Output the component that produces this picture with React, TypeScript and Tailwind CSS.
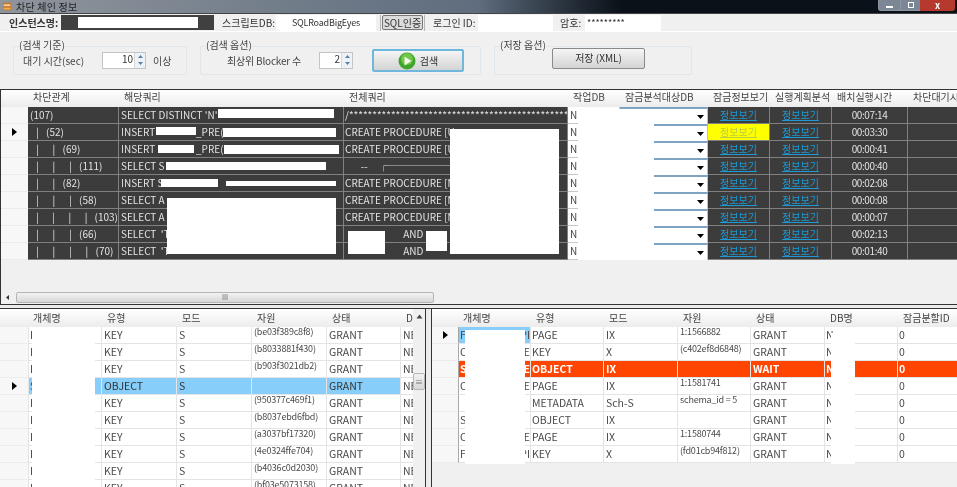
import { ReactNode } from 'react';

const topRows = [
  { depth: 0, id: '(107)', query: "SELECT DISTINCT 'N'", full: '/*********************************************************...', time: '00:07:14' },
  { depth: 1, id: '(52)', query: 'INSERT', query2: '_PRE(C', full: 'CREATE PROCEDURE [U', time: '00:03:30', marked: true },
  { depth: 2, id: '(69)', query: 'INSERT S', query2: '_PRE(C', full: 'CREATE PROCEDURE [U', time: '00:00:41' },
  { depth: 3, id: '(111)', query: 'SELECT S', full: '       --     ┌──────────', time: '00:00:40' },
  { depth: 2, id: '(82)', query: 'INSERT S', full: 'CREATE PROCEDURE [M', time: '00:02:08' },
  { depth: 3, id: '(58)', query: 'SELECT A', full: 'CREATE PROCEDURE [M', time: '00:00:08' },
  { depth: 4, id: '(103)', query: 'SELECT A', full: 'CREATE PROCEDURE [M', time: '00:00:07' },
  { depth: 3, id: '(66)', query: "SELECT  'T", full: '                          AND', time: '00:02:13' },
  { depth: 4, id: '(70)', query: "SELECT  'T", full: '                          AND', time: '00:01:40' },
];

const leftRows = [
  { name: 'I', type: 'KEY', res: '(be03f389c8f8)' },
  { name: 'I', type: 'KEY', res: '(b8033881f430)' },
  { name: 'I', type: 'KEY', res: '(b903f3021db2)' },
  { name: 'S', type: 'OBJECT', res: '', selected: true },
  { name: 'I', type: 'KEY', res: '(950377c469f1)' },
  { name: 'I', type: 'KEY', res: '(b8037ebd6fbd)' },
  { name: 'I', type: 'KEY', res: '(a3037bf17320)' },
  { name: 'I', type: 'KEY', res: '(4e0324ffe704)' },
  { name: 'I', type: 'KEY', res: '(b4036c0d2030)' },
  { name: 'I', type: 'KEY', res: '(bf03e5073158)' },
];

const rightRows = [
  { name: 'F', tail: 'PI', type: 'PAGE', mode: 'IX', res: '1:1566882', state: 'GRANT', current: true },
  { name: 'C', tail: 'E', type: 'KEY', mode: 'X', res: '(c402ef8d6848)', state: 'GRANT' },
  { name: 'S', tail: 'E', type: 'OBJECT', mode: 'IX', res: '', state: 'WAIT', waiting: true },
  { name: 'C', tail: 'E', type: 'PAGE', mode: 'IX', res: '1:1581741', state: 'GRANT' },
  { name: '', tail: '', type: 'METADATA', mode: 'Sch-S', res: 'schema_id = 5', state: 'GRANT' },
  { name: 'S', tail: '', type: 'OBJECT', mode: 'IX', res: '', state: 'GRANT' },
  { name: 'C', tail: 'E', type: 'PAGE', mode: 'IX', res: '1:1580744', state: 'GRANT' },
  { name: 'F', tail: 'PI', type: 'KEY', mode: 'X', res: '(fd01cb94f812)', state: 'GRANT' },
];

const topCols = 'grid grid-cols-[27px_91px_225px_224px_52px_88px_62px_62px_76px_50px]';
const leftCols = 'grid grid-cols-[28px_74px_75px_75px_75px_74px_13px]';
const rightCols = 'grid grid-cols-[26px_73px_73px_74px_73px_74px_73px_59px]';

function Pointer() {
  return (
    <svg width="5" height="8" viewBox="0 0 5 8" className="fill-black">
      <path d="M0 0 L5 4 L0 8 Z" />
    </svg>
  );
}

function Spinner({ value, width }: { value: string; width: string }) {
  return (
    <div className={`flex h-[17px] items-stretch border border-[#c4c4c4] bg-white ${width}`}>
      <span className="flex-1 pr-[1px] text-right text-[10px] leading-[12px] text-[#333]">{value}</span>
      <div className="flex w-[11px] flex-col border-l border-[#d8d8d8] bg-[#eef1f5]">
        <svg viewBox="0 0 11 7" className="h-[7px] w-[11px] fill-[#5b7fa8]"><path d="M3 5 L5.5 2 L8 5 Z" /></svg>
        <svg viewBox="0 0 11 7" className="h-[7px] w-[11px] fill-[#5b7fa8]"><path d="M3 2 L5.5 5 L8 2 Z" /></svg>
      </div>
    </div>
  );
}

function Group({ label, className, children }: { label: string; className: string; children: ReactNode }) {
  return (
    <div className={`relative flex h-[29px] items-center rounded-[2px] border border-[#dfe6ec] ${className}`}>
      <span className="absolute left-[5px] top-[-9px] bg-[#f0f0f0] text-[10px] leading-[14px] text-[#444]">{label}</span>
      {children}
    </div>
  );
}

function Header({ cols, labels, className }: { cols: string; labels: string[]; className?: string }) {
  return (
    <div className={`${cols} ${className ?? ''} bg-gradient-to-b from-white to-[#ececec] text-[10px] text-[#444]`}>
      <div />
      {labels.map((l, i) => (
        <div key={i} className="overflow-hidden whitespace-nowrap pl-[5px]">{l}</div>
      ))}
    </div>
  );
}

function Depth({ depth, id }: { depth: number; id: string }) {
  if (depth === 0) return <div className="truncate pl-[2px]">{id}</div>;
  const pipes = [];
  for (let i = 0; i < depth; i++) {
    pipes.push(
      <span key={i} className={i === depth - 1 ? 'inline-block w-[10px]' : 'inline-block w-[16.5px]'}>|</span>
    );
  }
  return <div className="flex whitespace-nowrap pl-[8px]">{pipes}<span>{id}</span></div>;
}

function TopGrid() {
  return (
    <div className="relative flex h-[214px] flex-col border-l border-l-[#333] bg-[#f0f0f0]">
      <Header
        cols={topCols}
        className="h-[17px] leading-[14px]"
        labels={['차단관계', '해당쿼리', '전체쿼리', '작업DB', '잠금분석대상DB', '잠금정보보기', '실행계획분석', '배치실행시간', '차단대기시']}
      />
      {topRows.map((r, i) => (
        <div key={i} className={`${topCols} h-[17px] text-[10px] leading-[16px] text-[#e2e2e2]`}>
          <div className="flex items-center justify-center border-b border-[#ececec] bg-[#f7f7f7]">
            {i === 1 && <Pointer />}
          </div>
          <div className="border-b border-r border-[#808080] bg-[#3c3c3c]">
            <Depth depth={r.depth} id={r.id} />
          </div>
          <div className="flex overflow-hidden whitespace-pre border-b border-r border-[#808080] bg-[#3c3c3c] pl-[2px]">
            <span className="w-[75px] shrink-0 overflow-visible">{r.query}</span>
            {r.query2 && <span>{r.query2}</span>}
          </div>
          <div className="overflow-hidden whitespace-pre border-b border-r border-[#808080] bg-[#3c3c3c] pl-[1px]">{r.full}</div>
          <div className="overflow-hidden border-b border-r border-[#c8c8c8] bg-white pl-[2px] text-[#444]">NE</div>
          <div className="flex items-center justify-end border-t-2 border-t-[#7fa3c2] border-r border-r-[#aac4da] bg-white pr-[3px]">
            <svg width="7" height="4" viewBox="0 0 7 4" className="fill-black"><path d="M0 0 H7 L3.5 4 Z" /></svg>
          </div>
          <div className={`border-b border-r border-[#808080] text-center underline ${r.marked ? 'bg-[#ffff00] text-[#b9cf3c]' : 'bg-[#3c3c3c] text-[#1c9ad6]'}`}>정보보기</div>
          <div className="border-b border-r border-[#808080] bg-[#3c3c3c] text-center text-[#1c9ad6] underline">정보보기</div>
          <div className="border-b border-r border-[#808080] bg-[#3c3c3c] text-center tracking-[-0.4px]">{r.time}</div>
          <div className="border-b border-[#808080] bg-[#3c3c3c]" />
        </div>
      ))}

      {/* masked areas, coordinates are relative to the grid */}
      <div className="absolute left-[217px] top-[19px] h-[9px] w-[116px] bg-white" />
      <div className="absolute left-[155px] top-[37px] h-[8px] w-[40px] bg-white" />
      <div className="absolute left-[222px] top-[38px] h-[9px] w-[113px] bg-white" />
      <div className="absolute left-[157px] top-[55px] h-[8px] w-[36px] bg-white" />
      <div className="absolute left-[223px] top-[55px] h-[9px] w-[115px] bg-white" />
      <div className="absolute left-[165px] top-[72px] h-[8px] w-[160px] bg-white" />
      <div className="absolute left-[160px] top-[89px] h-[8px] w-[57px] bg-white" />
      <div className="absolute left-[225px] top-[91px] h-[5px] w-[110px] bg-white" />
      <div className="absolute left-[166px] top-[108px] h-[56px] w-[169px] bg-white" />
      <div className="absolute left-[449px] top-[39px] h-[125px] w-[109px] bg-white" />
      <div className="absolute left-[347px] top-[141px] h-[23px] w-[37px] bg-white" />
      <div className="absolute left-[425px] top-[141px] h-[20px] w-[21px] bg-white" />
      <div className="absolute left-[577px] top-[17px] h-[153px] w-[41px] bg-white" />
      <div className="absolute left-[618px] top-[19px] h-[151px] w-[35px] bg-white" />

      <div className="mt-auto mb-[1px] flex h-[11px] items-center">
        <svg width="15" height="11" viewBox="0 0 15 11" className="fill-[#333]"><path d="M5 5.5 L8 3 V8 Z" /></svg>
        <div className="flex h-[11px] w-[418px] items-center justify-center rounded-[2px] border border-[#b5b5b5] bg-gradient-to-b from-[#f2f2f2] to-[#d8d8d8] text-[7px] leading-[7px] text-[#666]">III</div>
      </div>
    </div>
  );
}

function LeftGrid() {
  return (
    <div className="relative h-[178px] w-[426px] overflow-hidden border-r border-[#333] bg-white">
      <Header cols={leftCols} className="h-[18px] w-[414px] leading-[17px]" labels={['개체명', '유형', '모드', '자원', '상태', 'DI']} />
      {leftRows.map((r, i) => (
        <div key={i} className={`${leftCols} h-[17px] w-[414px] text-[10.5px] leading-[16px] text-[#4a4a4a]`}>
          <div className="flex items-center justify-center border-b border-[#ececec] bg-[#f7f7f7]">
            {r.selected && <Pointer />}
          </div>
          <div className={`overflow-hidden border-b border-r border-l border-[#e4e4e4] pl-[1px] ${r.selected ? 'bg-[#87cefa]' : ''}`}>{r.name}</div>
          <div className={`border-b border-r border-[#e4e4e4] pl-[2px] ${r.selected ? 'bg-[#87cefa] text-[#333]' : ''}`}>{r.type}</div>
          <div className={`border-b border-r border-[#e4e4e4] pl-[2px] ${r.selected ? 'bg-[#87cefa] text-[#333]' : ''}`}>S</div>
          <div className={`overflow-hidden whitespace-nowrap border-b border-r border-[#e4e4e4] pl-[2px] text-[9px] leading-[10px] tracking-[-0.2px] ${r.selected ? 'bg-[#87cefa]' : ''}`}>{r.res}</div>
          <div className={`border-b border-r border-[#e4e4e4] pl-[2px] ${r.selected ? 'bg-[#87cefa] text-[#333]' : ''}`}>GRANT</div>
          <div className="overflow-hidden border-b border-[#e4e4e4] pl-[2px]">NE</div>
        </div>
      ))}
      <div className="absolute left-[32px] top-[18px] h-full w-[63px] bg-white" />
      <div className="absolute bottom-0 right-0 top-0 flex w-[12px] flex-col items-center bg-[#f0f0f0]">
        <svg width="7" height="5" viewBox="0 0 7 5" className="mt-[5px] fill-[#444]"><path d="M0.5 4.5 L3.5 0.5 L6.5 4.5 Z" /></svg>
        <div className="mt-[54px] flex h-[17px] w-[12px] items-center justify-center rounded-[2px] border border-[#b5b5b5] bg-gradient-to-b from-[#f2f2f2] to-[#d8d8d8] text-[8px] leading-[8px] text-[#777]">≡</div>
      </div>
    </div>
  );
}

function RightGrid() {
  return (
    <div className="relative h-[178px] flex-1 overflow-hidden border-l border-[#333] bg-[#f0f0f0]">
      <Header
        cols={rightCols}
        className="h-[18px] leading-[17px]"
        labels={['개체명', '유형', '모드', '자원', '상태', 'DB명', '잠금분할ID']}
      />
      {rightRows.map((r, i) => {
        const tone = r.waiting ? 'bg-[#ff4500] text-white font-bold' : 'bg-white';
        return (
          <div key={i} className={`${rightCols} h-[17px] text-[10.5px] leading-[16px] text-[#4a4a4a]`}>
            <div className="flex items-center justify-center border-b border-[#ececec] bg-[#f7f7f7]">
              {i === 0 && <Pointer />}
            </div>
            <div className={`flex justify-between overflow-hidden border-b border-r border-l border-l-[#a8a8a8] border-[#e4e4e4] pl-[1px] ${r.current ? 'bg-[#87cefa]' : tone}`}>
              <span>{r.name}</span>
              <span>{r.tail}</span>
            </div>
            <div className={`border-b border-r border-[#e4e4e4] pl-[1px] ${tone}`}>{r.type}</div>
            <div className={`border-b border-r border-[#e4e4e4] pl-[2px] ${tone}`}>{r.mode}</div>
            <div className={`overflow-hidden whitespace-nowrap border-b border-r border-[#e4e4e4] pl-[2px] text-[9px] leading-[10px] tracking-[-0.2px] ${tone}`}>{r.res}</div>
            <div className={`border-b border-r border-[#e4e4e4] pl-[2px] ${tone}`}>{r.state}</div>
            <div className={`overflow-hidden border-b border-r border-[#e4e4e4] pl-[1px] ${tone}`}>N</div>
            <div className={`border-b border-[#e4e4e4] pl-[1px] ${tone}`}>0</div>
          </div>
        );
      })}
      <div className="absolute left-[33px] top-[21px] h-[134px] w-[60px] bg-white" />
      <div className="absolute left-[399px] top-[24px] h-[131px] w-[24px] bg-white" />
    </div>
  );
}

export default function App() {
  return (
    <div className="h-[487px] w-[957px] overflow-hidden bg-[#f0f0f0] font-['Noto_Sans_CJK_KR','Liberation_Sans',sans-serif] blur-[0.4px]">
      {/* title bar */}
      <div className="flex h-[13px] items-start bg-gradient-to-r from-[#8f959c] via-[#5f6d7e] via-50% to-[#0a1118] to-65%">
        <svg width="10" height="11" viewBox="0 0 12 11" className="ml-[2px] mt-[1px]">
          <rect x="1" y="1" width="10" height="9" fill="#c9772e" />
          <rect x="2" y="3" width="8" height="2" fill="#f7d9a8" />
          <rect x="2" y="7" width="8" height="2" fill="#f2b257" />
        </svg>
        <span className="ml-[4px] text-[10px] leading-[13px] tracking-[0.2px] text-[#222]">차단 체인 정보</span>
        <div className="ml-auto mr-[2px] flex h-[11px]">
          <div className="flex w-[23px] items-center justify-center rounded-bl-[3px] border border-t-0 border-[#8d97a3] bg-[#7b8794]">
            <div className="mt-[4px] h-[2px] w-[7px] bg-white" />
          </div>
          <div className="flex w-[19px] items-center justify-center border-b border-[#8d97a3] bg-[#7b8794]">
            <div className="h-[6px] w-[6px] border border-white" />
          </div>
          <div className="flex w-[35px] items-center justify-center rounded-br-[3px] bg-[#b53a2d] text-[9px] font-bold leading-[9px] text-white">x</div>
        </div>
      </div>
      <div className="h-[1px] bg-[#444]" />

      {/* connection toolbar */}
      <div className="flex h-[18px] items-center whitespace-nowrap border-b border-white text-[10px] leading-[14px] text-[#333]">
        <span className="ml-[9px] w-[48px] font-bold">인스턴스명:</span>
        <div className="ml-[4px] flex h-[15px] w-[153px] items-center justify-center bg-[#404040]">
          <div className="h-[11px] w-[120px] bg-white" />
        </div>
        <span className="ml-[8px] w-[51px]">스크립트DB:</span>
        <div className="ml-[3px] h-[16px] w-[100px] bg-white text-center text-[9px] leading-[16px] tracking-[-0.2px]">SQLRoadBigEyes</div>
        <div className="ml-[4px] h-[16px] w-[1px] bg-[#b5b5b5]" />
        <div className="ml-[1px] h-[15px] w-[41px] rounded-[2px] border border-[#777] bg-[#dcdcdc] text-center leading-[13px]">SQL인증</div>
        <div className="ml-[1px] h-[16px] w-[1px] bg-[#b5b5b5]" />
        <span className="ml-[8px] w-[41px]">로그인 ID:</span>
        <div className="ml-[4px] h-[16px] w-[75px] bg-white" />
        <span className="ml-[7px] w-[22px]">암호:</span>
        <div className="ml-[3px] h-[16px] w-[76px] bg-white pl-[2px] text-[9px] leading-[15px]">*********</div>
      </div>

      {/* search options */}
      <div className="flex h-[57px] items-start pt-[14px] text-[10px] leading-[14px] text-[#444]">
        <Group label="(검색 기준)" className="ml-[13px] w-[174px]">
          <span className="ml-[9px] w-[79px]">대기 시간(sec)</span>
          <Spinner value="10" width="w-[44px]" />
          <span className="ml-[7px]">이상</span>
        </Group>
        <Group label="(검색 옵션)" className="ml-[13px] w-[281px]">
          <span className="ml-[26px] w-[92px] tracking-[-0.2px]">최상위 Blocker 수</span>
          <Spinner value="2" width="w-[34px]" />
          <button className="ml-[19px] flex h-[23px] w-[92px] items-center justify-center rounded-[2px] border-2 border-[#6fb7dd] bg-gradient-to-b from-[#f5f5f5] to-[#d4d4d4]">
            <svg width="18" height="18" viewBox="0 0 18 18">
              <circle cx="9" cy="9" r="8.5" fill="#3fa52b" />
              <circle cx="9" cy="7" r="6" fill="#8fdc5f" opacity="0.6" />
              <path d="M6.5 4.5 L13.5 9 L6.5 13.5 Z" fill="#f4f7e8" />
            </svg>
            <span className="ml-[4px] text-[10px] text-[#333]">검색</span>
          </button>
        </Group>
        <Group label="(저장 옵션)" className="ml-[13px] w-[198px]">
          <button className="ml-[57px] mt-[-5px] h-[21px] w-[93px] rounded-[2px] border border-[#8a8a8a] bg-gradient-to-b from-[#f5f5f5] to-[#d4d4d4] text-[10px] text-[#333]">저장 (XML)</button>
        </Group>
      </div>

      <div className="h-[1px] bg-[#333]" />
      <TopGrid />
      <div className="h-[1px] bg-[#333]" />
      <div className="h-[3px] bg-[#ececec]" />
      <div className="h-[1px] bg-[#333]" />

      {/* lower lock lists */}
      <div className="flex">
        <LeftGrid />
        <div className="w-[5px] bg-[#ececec]" />
        <RightGrid />
      </div>
    </div>
  );
}
